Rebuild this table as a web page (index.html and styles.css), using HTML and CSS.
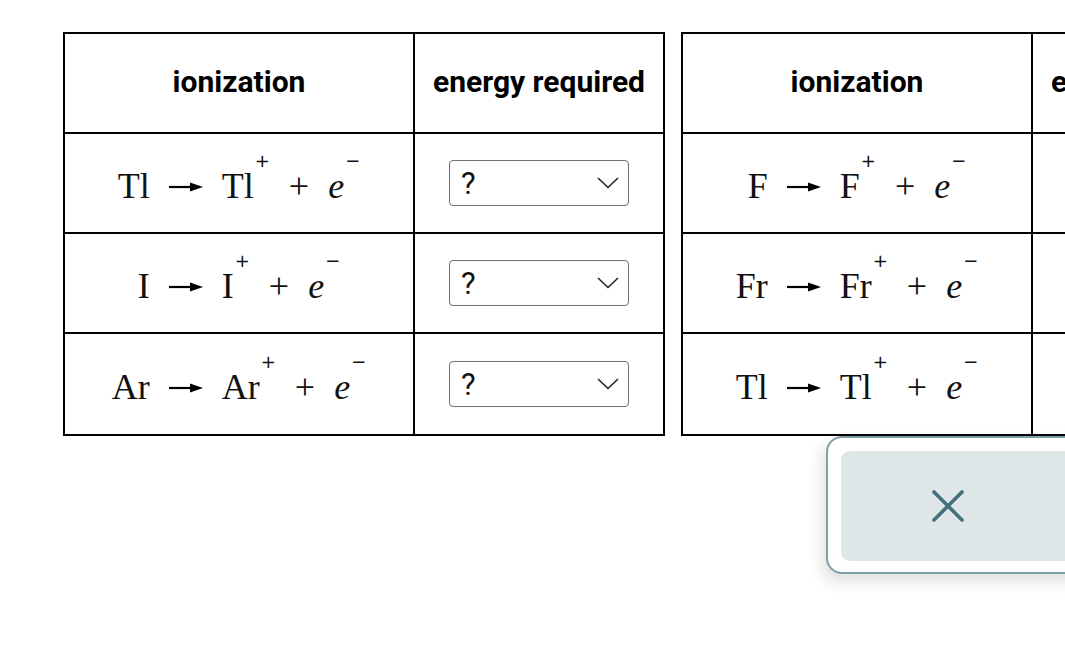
FILE: index.html
```html
<!DOCTYPE html>
<html>
<head>
<meta charset="utf-8">
<link rel="stylesheet" href="styles.css">
</head>
<body>
<div class="page">
  <div class="tables">
    <table class="grid">
      <colgroup><col class="c1"><col class="c2"></colgroup>
      <tr class="head"><th>ionization</th><th>energy required</th></tr>
      <tr><td><span class="eq"><span class="sp">Tl</span><svg class="arrow" width="34" height="12" viewBox="0 0 34 12"><line x1="0" y1="6" x2="24" y2="6" stroke="#000" stroke-width="2.2"/><path d="M21 1.5 L34 6 L21 10.5 Z" fill="#000"/></svg><span class="sp">Tl<sup>+</sup></span><span class="sp">+</span><span class="sp"><i>e</i><sup>−</sup></span></span></td>
        <td><div class="sel"><span class="q">?</span><svg width="22" height="12" viewBox="0 0 22 12"><path d="M1 1 L11 10.5 L21 1" fill="none" stroke="#222" stroke-width="1.6"/></svg></div></td></tr>
      <tr><td><span class="eq"><span class="sp">I</span><svg class="arrow" width="34" height="12" viewBox="0 0 34 12"><line x1="0" y1="6" x2="24" y2="6" stroke="#000" stroke-width="2.2"/><path d="M21 1.5 L34 6 L21 10.5 Z" fill="#000"/></svg><span class="sp">I<sup>+</sup></span><span class="sp">+</span><span class="sp"><i>e</i><sup>−</sup></span></span></td>
        <td><div class="sel"><span class="q">?</span><svg width="22" height="12" viewBox="0 0 22 12"><path d="M1 1 L11 10.5 L21 1" fill="none" stroke="#222" stroke-width="1.6"/></svg></div></td></tr>
      <tr class="last"><td><span class="eq"><span class="sp">Ar</span><svg class="arrow" width="34" height="12" viewBox="0 0 34 12"><line x1="0" y1="6" x2="24" y2="6" stroke="#000" stroke-width="2.2"/><path d="M21 1.5 L34 6 L21 10.5 Z" fill="#000"/></svg><span class="sp">Ar<sup>+</sup></span><span class="sp">+</span><span class="sp"><i>e</i><sup>−</sup></span></span></td>
        <td><div class="sel"><span class="q">?</span><svg width="22" height="12" viewBox="0 0 22 12"><path d="M1 1 L11 10.5 L21 1" fill="none" stroke="#222" stroke-width="1.6"/></svg></div></td></tr>
    </table>
    <table class="grid">
      <colgroup><col class="c1"><col class="c2"></colgroup>
      <tr class="head"><th>ionization</th><th>energy required</th></tr>
      <tr><td><span class="eq"><span class="sp">F</span><svg class="arrow" width="34" height="12" viewBox="0 0 34 12"><line x1="0" y1="6" x2="24" y2="6" stroke="#000" stroke-width="2.2"/><path d="M21 1.5 L34 6 L21 10.5 Z" fill="#000"/></svg><span class="sp">F<sup>+</sup></span><span class="sp">+</span><span class="sp"><i>e</i><sup>−</sup></span></span></td>
        <td><div class="sel"><span class="q">?</span><svg width="22" height="12" viewBox="0 0 22 12"><path d="M1 1 L11 10.5 L21 1" fill="none" stroke="#222" stroke-width="1.6"/></svg></div></td></tr>
      <tr><td><span class="eq"><span class="sp">Fr</span><svg class="arrow" width="34" height="12" viewBox="0 0 34 12"><line x1="0" y1="6" x2="24" y2="6" stroke="#000" stroke-width="2.2"/><path d="M21 1.5 L34 6 L21 10.5 Z" fill="#000"/></svg><span class="sp">Fr<sup>+</sup></span><span class="sp">+</span><span class="sp"><i>e</i><sup>−</sup></span></span></td>
        <td><div class="sel"><span class="q">?</span><svg width="22" height="12" viewBox="0 0 22 12"><path d="M1 1 L11 10.5 L21 1" fill="none" stroke="#222" stroke-width="1.6"/></svg></div></td></tr>
      <tr class="last"><td><span class="eq"><span class="sp">Tl</span><svg class="arrow" width="34" height="12" viewBox="0 0 34 12"><line x1="0" y1="6" x2="24" y2="6" stroke="#000" stroke-width="2.2"/><path d="M21 1.5 L34 6 L21 10.5 Z" fill="#000"/></svg><span class="sp">Tl<sup>+</sup></span><span class="sp">+</span><span class="sp"><i>e</i><sup>−</sup></span></span></td>
        <td><div class="sel"><span class="q">?</span><svg width="22" height="12" viewBox="0 0 22 12"><path d="M1 1 L11 10.5 L21 1" fill="none" stroke="#222" stroke-width="1.6"/></svg></div></td></tr>
    </table>
  </div>
  <div class="popup">
    <div class="btn">
      <svg width="32" height="32" viewBox="0 0 32 32"><path d="M2 2 L30 30 M30 2 L2 30" stroke="#44707d" stroke-width="3.6" stroke-linecap="round" fill="none"/></svg>
    </div>
  </div>
</div>
</body>
</html>
```

FILE: styles.css
```css
html, body {
  margin: 0;
  padding: 0;
  background: #fff;
  overflow: hidden;
  width: 1065px;
  height: 667px;
}
.page {
  position: relative;
  padding: 32px 0 0 63px;
}
.tables {
  display: flex;
  gap: 16px;
  width: 1300px;
}
.grid {
  border-collapse: collapse;
  table-layout: fixed;
  width: 600px;
  flex: none;
}
.grid col.c1 { width: 350px; }
.grid col.c2 { width: 250px; }
.grid th, .grid td {
  border: 2px solid #000;
  padding: 0;
  height: 98px;
  text-align: center;
  vertical-align: middle;
}
.grid tr.last td {
  height: 100px;
}
.grid th {
  font-family: Roboto, "Liberation Sans", sans-serif;
  font-weight: 700;
  font-size: 30px;
  color: #000;
  height: 95px;
  padding-bottom: 3px;
}
.grid th:nth-child(2) {
  text-align: left;
  padding-left: 18px;
  white-space: nowrap;
  overflow: hidden;
}
.eq {
  display: inline-flex;
  align-items: baseline;
  gap: 19px;
  font-family: "Liberation Serif", "DejaVu Serif", serif;
  font-size: 36px;
  color: #111;
  padding-top: 2px;
}
.eq i {
  font-style: italic;
}
.eq sup {
  font-family: "DejaVu Sans", sans-serif;
  font-size: 18px;
  vertical-align: 31px;
  line-height: 0;
  margin-left: 1px;
}
.arrow {
  align-self: center;
  margin-top: 6px;
}
.sel {
  margin: 0 auto;
  border: 1.5px solid #707070;
  border-radius: 4px;
  display: flex;
  align-items: center;
  justify-content: space-between;
  padding: 0 9px 0 11px;
  box-sizing: border-box;
  width: 180px;
  height: 46px;
}
.sel .q {
  font-family: Roboto, "Liberation Sans", sans-serif;
  font-size: 31px;
  color: #111;
  line-height: 1;
}
.popup {
  position: absolute;
  left: 826px;
  top: 436px;
  width: 300px;
  height: 138px;
  box-sizing: border-box;
  border: 2px solid #7f9ea6;
  border-radius: 16px;
  background: #fff;
  padding: 13px;
  box-shadow: -4px 8px 16px rgba(0, 0, 0, 0.12);
}
.btn {
  height: 110px;
  background: #dfe6e8;
  border-radius: 9px;
  display: flex;
  align-items: center;
  padding-left: 91px;
}
```
